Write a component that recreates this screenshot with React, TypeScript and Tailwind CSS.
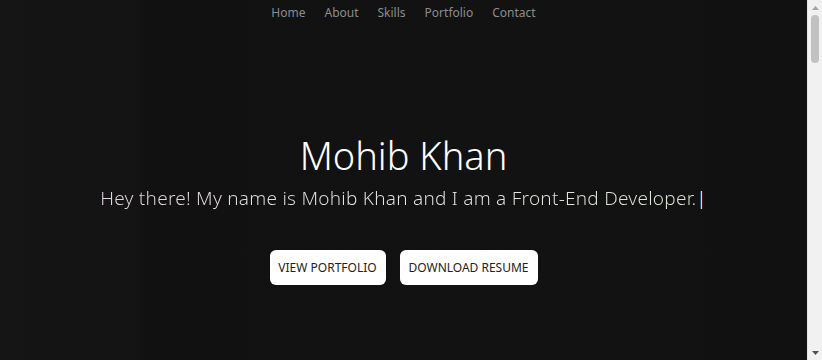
import React from "react";

export default function App() {
  const links = ["Home", "About", "Skills", "Portfolio", "Contact"];
  return (
    <div className="flex h-[360px] w-full overflow-hidden [font-family:'Noto_Sans',sans-serif]">
      <div className="flex h-[360px] flex-1 flex-col items-center bg-[linear-gradient(90deg,#151515_0%,#141414_17%,#111111_18%,#121212_60%,#111111_100%)] text-white">
        <nav className="flex h-[26px] items-center gap-[19px] text-[12px] text-[#8c8c8c]">
          {links.map((l) => (
            <span key={l}>{l}</span>
          ))}
        </nav>
        <h1 className="mt-[109px] text-[38px] font-light leading-[40px] text-white">Mohib Khan</h1>
        <p className="mt-[10px] bg-[linear-gradient(90deg,#e4d6e2,#e6e6e6_50%,#dde6d6)] bg-clip-text text-[19px] font-light leading-[26px] tracking-[0.25px] text-transparent">
          Hey there! My name is Mohib Khan and I am a Front-End Developer.<span className="text-[#dddddd]">|</span>
        </p>
        <div className="mt-[39px] flex gap-[14px]">
          <button className="h-[35px] w-[116px] rounded-[6px] bg-white text-[12px] text-[#222]">VIEW PORTFOLIO</button>
          <button className="h-[35px] w-[138px] rounded-[6px] bg-white text-[12px] text-[#222]">DOWNLOAD RESUME</button>
        </div>
      </div>
      <div className="flex w-[15px] flex-col items-center border-l border-[#e4e4e4] bg-[#f1f1f1]">
        <div className="flex h-[15px] w-full items-center justify-center">
          <svg width="7" height="4" viewBox="0 0 7 4"><path d="M3.5 0L7 4H0z" fill="#a3a3a3" /></svg>
        </div>
        <div className="h-[48px] w-[8px] rounded-[4px] bg-[#c1c1c1]" />
        <div className="flex-1" />
        <div className="flex h-[15px] w-full items-center justify-center">
          <svg width="7" height="4" viewBox="0 0 7 4"><path d="M0 0H7L3.5 4z" fill="#505050" /></svg>
        </div>
      </div>
    </div>
  );
}
